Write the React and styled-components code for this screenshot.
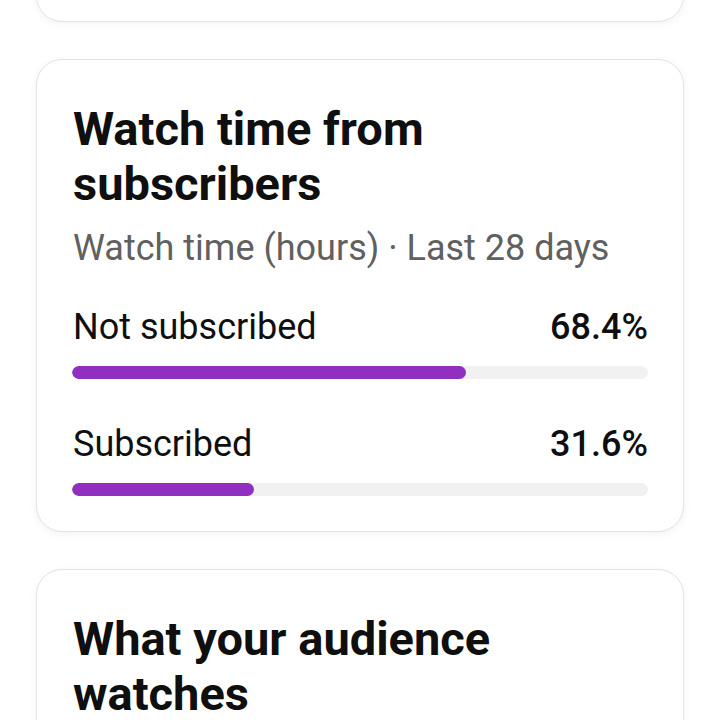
import React from "react";
import styled, { createGlobalStyle } from "styled-components";

const GlobalStyle = createGlobalStyle`
  html, body {
    margin: 0;
    padding: 0;
    background: #ffffff;
  }
  body {
    font-family: Roboto, "Noto Sans", "Liberation Sans", sans-serif;
    color: #0f0f0f;
    overflow: hidden;
  }
`;

const Feed = styled.div`
  display: flex;
  flex-direction: column;
  gap: 37px;
  padding: 0 36px;
  margin-top: -178px;
`;

const Card = styled.section`
  background: #ffffff;
  border: 1px solid #e3e3e3;
  border-radius: 26px;
  box-shadow: 0 2px 10px rgba(0, 0, 0, 0.05);
  padding: 41px 35px 35px;
  min-height: ${(p) => p.$minHeight || 0}px;
  box-sizing: border-box;
`;

const Title = styled.h2`
  margin: 0;
  padding-left: 1px;
  font-size: 47px;
  line-height: 55px;
  font-weight: 700;
  color: #0f0f0f;
`;

const Subtitle = styled.p`
  margin: 15px 0 0;
  padding-left: 1px;
  font-size: 36px;
  line-height: 44px;
  color: #606060;
`;

const Rows = styled.div`
  display: flex;
  flex-direction: column;
  gap: 45px;
  margin-top: 37px;
`;

const Row = styled.div`
  display: flex;
  flex-direction: column;
  gap: 19px;
`;

const RowHead = styled.div`
  display: flex;
  justify-content: space-between;
  align-items: baseline;
  padding-left: 1px;
  font-size: 36px;
  line-height: 40px;
`;

const Label = styled.span`
  font-weight: 400;
  color: #0f0f0f;
`;

const Value = styled.span`
  font-weight: 500;
  color: #0f0f0f;
`;

const Track = styled.div`
  height: 13px;
  border-radius: 7px;
  background: #f1f1f1;
  overflow: hidden;
`;

const Fill = styled.div`
  height: 100%;
  border-radius: 7px;
  background: #9130c0;
`;

const rows = [
  { label: "Not subscribed", value: 68.4 },
  { label: "Subscribed", value: 31.6 },
];

export default function App() {
  return (
    <>
      <GlobalStyle />
      <Feed>
        <Card $minHeight={200} />
        <Card>
          <Title>Watch time from subscribers</Title>
          <Subtitle>Watch time (hours) · Last 28 days</Subtitle>
          <Rows>
            {rows.map((r) => (
              <Row key={r.label}>
                <RowHead>
                  <Label>{r.label}</Label>
                  <Value>{r.value}%</Value>
                </RowHead>
                <Track>
                  <Fill style={{ width: `${r.value}%` }} />
                </Track>
              </Row>
            ))}
          </Rows>
        </Card>
        <Card>
          <Title>What your audience watches</Title>
        </Card>
      </Feed>
    </>
  );
}
